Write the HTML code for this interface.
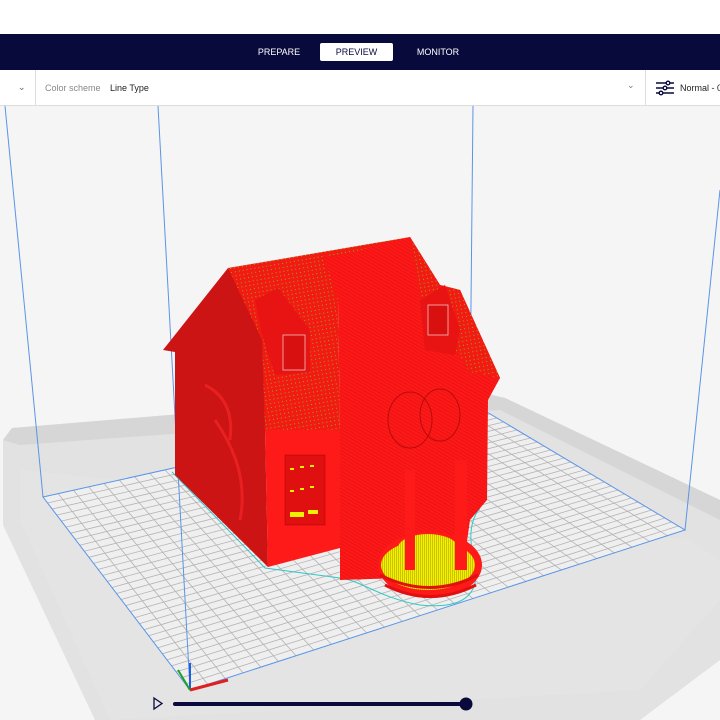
<!DOCTYPE html>
<html><head><meta charset="utf-8"><style>
*{margin:0;padding:0;box-sizing:border-box}
body{width:720px;height:720px;overflow:hidden;background:#f5f5f5;font-family:"Liberation Sans",sans-serif;position:relative}
#top{position:absolute;left:0;top:0;width:720px;height:34px;background:#fff}
#nav{position:absolute;left:0;top:34px;width:720px;height:36px;background:#080a3c}
.tab{position:absolute;top:9px;height:18px;font-size:9px;color:#fff;line-height:18px;text-align:center}
#bar{position:absolute;left:0;top:70px;width:720px;height:36px;background:#fff;border-bottom:1px solid #ddd;font-size:9px}
svg{position:absolute;left:0;top:0}
</style></head><body>
<svg id="scene" width="720" height="720" viewBox="0 0 720 720">
<defs>
<pattern id="st" width="3" height="3" patternUnits="userSpaceOnUse" patternTransform="rotate(30)"><rect width="3" height="3" fill="#ff1818"/><rect width="3" height="1" fill="#ea1414"/></pattern>
<pattern id="rf" width="4" height="4" patternUnits="userSpaceOnUse" patternTransform="rotate(-10)"><rect width="4" height="4" fill="#f21a12"/><rect x="0" y="0" width="1" height="1" fill="#8ab020"/></pattern>
<pattern id="yl" width="2" height="2" patternUnits="userSpaceOnUse"><rect width="2" height="2" fill="#f5f000"/><rect width="1" height="2" fill="#c8c400"/></pattern>
</defs>
<polygon points="3,440 12,428 470,390 505,398 720,500 720,660 640,720 95,720 3,525" fill="#e2e2e2"/>
<polygon points="3,440 12,428 470,390 505,398 720,500 720,520 500,410 20,445" fill="#d6d6d6"/>
<polygon points="20,470 690,540 720,560 720,600 640,690 110,720 20,520" fill="#e6e6e6" opacity="0.6"/>
<polygon points="43,497 470,402 685,530 190,690" fill="#efefef"/>
<g id="grid" stroke="#b4b4b4" stroke-width="0.8"></g>
<polygon points="43,497 470,402 685,530 190,690" fill="none" stroke="#5a94e8" stroke-width="1"/>
<line x1="43" y1="497" x2="5" y2="106" stroke="#5a94e8" stroke-width="1"/>
<line x1="190" y1="690" x2="158" y2="106" stroke="#5a94e8" stroke-width="1"/>
<line x1="685" y1="530" x2="720" y2="190" stroke="#5a94e8" stroke-width="1"/>
<line x1="470" y1="402" x2="473" y2="106" stroke="#5a94e8" stroke-width="1"/>
<path d="M172,472 L265,568 L340,578 C360,580 380,598 420,605 C470,610 480,590 475,560 C468,540 470,520 480,508" fill="none" stroke="#30c8c8" stroke-width="1"/>
<!-- house -->
<polygon points="228,268 322,252 410,237 440,285 460,290 500,378 470,375 338,300 340,430 265,430 255,340" fill="url(#rf)"/>
<polygon points="163,350 228,268 262,340 265,430 268,567 175,475 175,352" fill="#cc1414"/>
<path d="M205,385 Q235,400 230,440 M215,420 Q250,470 240,520" stroke="#e82020" stroke-width="3" fill="none"/>
<polygon points="265,430 340,430 340,548 268,567" fill="#ff1a1a"/>
<polygon points="322,252 330,258 410,237 440,285 460,290 500,378 488,400 487,500 470,520 466,548 400,578 340,580 340,430 338,300" fill="url(#st)"/>
<polygon points="410,237 440,285 460,290 500,378 470,372 420,300" fill="url(#rf)"/>
<polygon points="255,300 278,288 310,330 310,372 275,375 262,335" fill="#e81414"/>
<rect x="283" y="335" width="22" height="35" fill="#d81010" stroke="#f0c0c0" stroke-width="0.8"/>
<polygon points="420,300 445,285 460,330 455,355 425,350" fill="#e81414"/>
<rect x="428" y="305" width="20" height="30" fill="#d81010" stroke="#f0c0c0" stroke-width="0.8"/>
<ellipse cx="410" cy="420" rx="22" ry="28" fill="none" stroke="#b80c0c" stroke-width="1"/>
<ellipse cx="440" cy="415" rx="20" ry="26" fill="none" stroke="#b80c0c" stroke-width="1"/>
<rect x="285" y="455" width="40" height="70" fill="#e01010" stroke="#a00" stroke-width="0.5"/>
<g fill="#f0f000"><rect x="290" y="468" width="4" height="2"/><rect x="300" y="466" width="4" height="2"/><rect x="310" y="465" width="4" height="2"/><rect x="290" y="490" width="4" height="2"/><rect x="300" y="488" width="4" height="2"/><rect x="310" y="486" width="4" height="2"/><rect x="290" y="512" width="14" height="5"/><rect x="308" y="510" width="10" height="4"/></g>
<ellipse cx="430" cy="565" rx="52" ry="33" fill="#ff1a1a"/>
<ellipse cx="428" cy="565" rx="47" ry="25" fill="url(#yl)"/>
<path d="M380,575 Q430,600 478,575" stroke="#e01010" stroke-width="3" fill="none"/>
<path d="M385,585 Q430,608 476,585" stroke="#e01010" stroke-width="3" fill="none"/>
<ellipse cx="428" cy="548" rx="30" ry="14" fill="url(#yl)"/>
<rect x="405" y="470" width="10" height="100" fill="#ff1a1a"/><rect x="455" y="460" width="12" height="110" fill="#ff1a1a"/>
<!-- axes -->
<line x1="190" y1="690" x2="190" y2="663" stroke="#2060e0" stroke-width="2"/>
<line x1="190" y1="690" x2="228" y2="680" stroke="#e02020" stroke-width="3"/>
<line x1="190" y1="690" x2="178" y2="670" stroke="#20a020" stroke-width="2"/>
<!-- slider -->
<path d="M154,698 L162,703.5 L154,709 Z" fill="none" stroke="#080a3c" stroke-width="1.3"/>
<line x1="175" y1="704" x2="464" y2="704" stroke="#080a3c" stroke-width="4" stroke-linecap="round"/>
<circle cx="466" cy="704" r="6.5" fill="#080a3c"/>
</svg>
<div id="top"></div>
<div id="nav">
<div class="tab" style="left:252px;width:54px">PREPARE</div>
<div class="tab" style="left:320px;width:73px;background:#fff;color:#080a3c;border-radius:2px">PREVIEW</div>
<div class="tab" style="left:410px;width:56px">MONITOR</div>
</div>
<div id="bar">
<div style="position:absolute;left:18px;top:12px;color:#666;font-size:9px">&#8964;</div>
<div style="position:absolute;left:35px;top:0;width:1px;height:36px;background:#ddd"></div>
<div style="position:absolute;left:45px;top:13px;color:#888">Color scheme</div>
<div style="position:absolute;left:110px;top:13px;color:#222">Line Type</div>
<div style="position:absolute;left:627px;top:10px;color:#777;font-size:9px">&#8964;</div>
<div style="position:absolute;left:645px;top:0;width:1px;height:36px;background:#ddd"></div>
<svg style="left:655px;top:10px" width="20" height="16" viewBox="0 0 20 16"><g stroke="#080a3c" stroke-width="1.4" fill="#fff"><line x1="1" y1="3" x2="19" y2="3"/><line x1="1" y1="8" x2="19" y2="8"/><line x1="1" y1="13" x2="19" y2="13"/><circle cx="13" cy="3" r="1.8"/><circle cx="10" cy="8" r="1.8"/><circle cx="6" cy="13" r="1.8"/></g></svg>
<div style="position:absolute;left:680px;top:13px;color:#222;white-space:nowrap">Normal - 0</div>
</div>
<script>
var g=document.getElementById('grid');var A=[43,497],B=[470,402],C=[685,530],D=[190,690];var n=28,m=32;
function L(p,q,t){return[p[0]+(q[0]-p[0])*t,p[1]+(q[1]-p[1])*t]}
var s='';for(var i=1;i<n;i++){var t=i/n,a=L(A,B,t),b=L(D,C,t);s+='<line x1="'+a[0]+'" y1="'+a[1]+'" x2="'+b[0]+'" y2="'+b[1]+'"/>';}
for(var j=1;j<m;j++){var t=j/m,a=L(A,D,t),b=L(B,C,t);s+='<line x1="'+a[0]+'" y1="'+a[1]+'" x2="'+b[0]+'" y2="'+b[1]+'"/>';}
g.innerHTML=s;
</script>
</body></html>
